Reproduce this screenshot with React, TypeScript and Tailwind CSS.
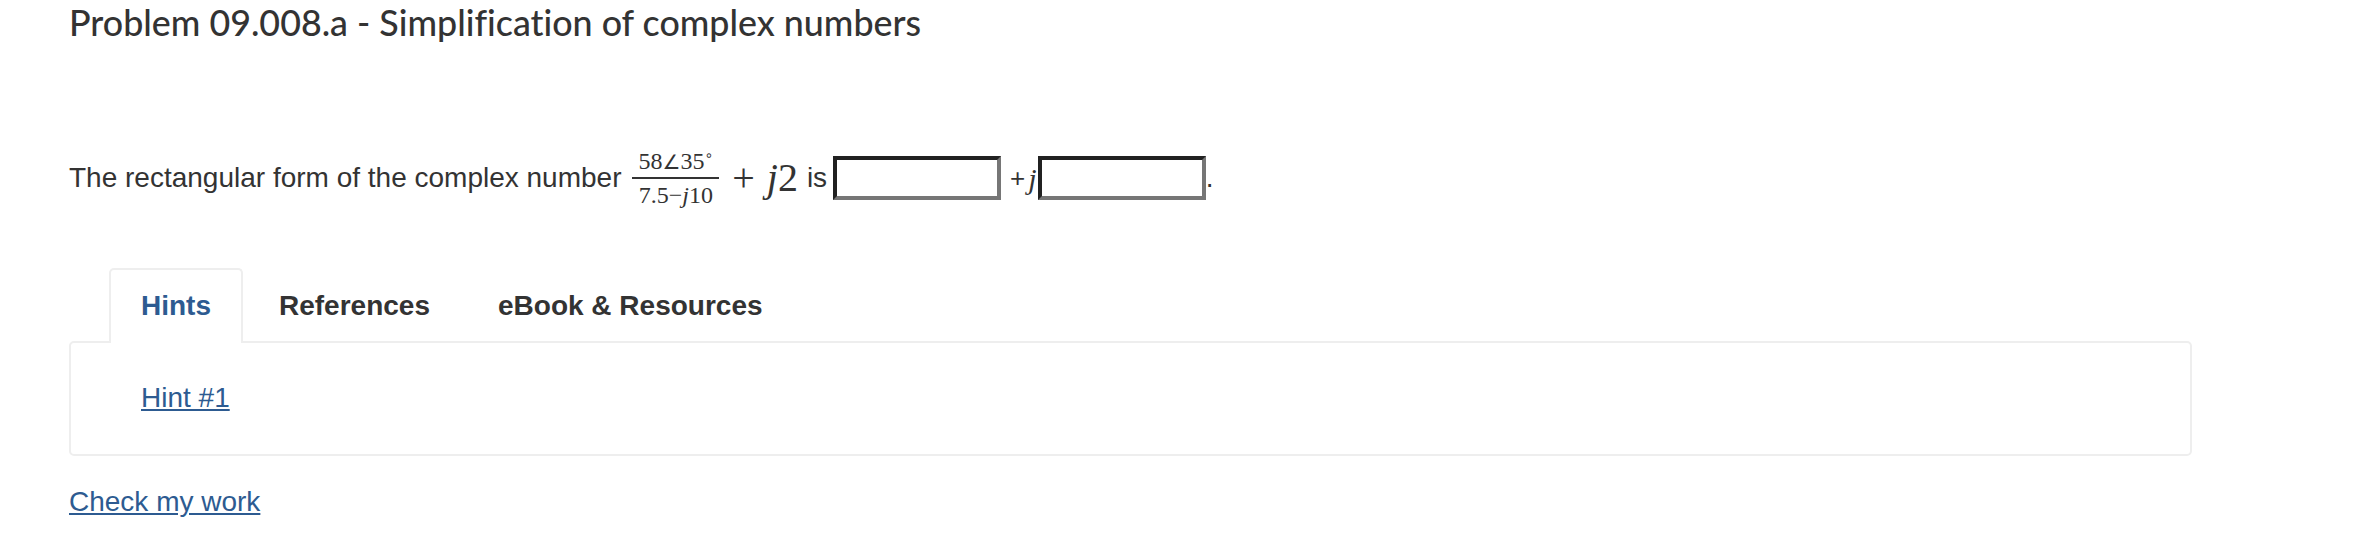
import React from 'react';

const serif = "font-['Liberation_Serif',serif]";

const AnswerBox: React.FC = () => (
  <input
    type="text"
    className="h-[44px] w-[168px] border-[4px] border-t-[#212121] border-l-[#212121] border-r-[#767676] border-b-[#767676] bg-white"
  />
);

const Fraction: React.FC = () => (
  <span className={`mr-[13px] ml-[11px] inline-flex flex-col items-center text-[24px] leading-[27px] text-[#333] ${serif}`}>
    <span className="border-b-2 border-[#333] px-[6px] pb-[1px]">
      58<span className="font-['DejaVu_Sans',sans-serif] text-[20px]">∠</span>35
      <span className="relative -top-[9px] font-['DejaVu_Sans',sans-serif] text-[14px] leading-none">∘</span>
    </span>
    <span className="pt-[3px]">
      7.5−<i>j</i>10
    </span>
  </span>
);

export default function App() {
  return (
    <div className="h-[551px] w-[2371px] overflow-hidden bg-white px-[69px] font-['Liberation_Sans',Arial,sans-serif] text-[#333]">
      <h1 className="pt-[2px] font-['Lato',sans-serif] text-[35.8px] leading-[42px] font-medium text-[#333] [font-variant-ligatures:none]">
        Problem 09.008.a - Simplification of complex numbers
      </h1>

      <div className="mt-[104px] flex h-[60px] items-center text-[28px]">
        <span>The rectangular form of the complex number</span>
        <Fraction />
        <span className={`text-[40px] ${serif}`}>
          +<i className="ml-[12px]">j</i>2
        </span>
        <span className="mr-[6px] ml-[9px]">is</span>
        <AnswerBox />
        <span className="ml-[9px] text-[26px] font-medium">+</span>
        <i className={`mr-[1px] ml-[3px] text-[30px] ${serif}`}>j</i>
        <AnswerBox />
        <span>.</span>
      </div>

      <div className="mt-[60px]">
        <div className="flex pl-[40px]">
          <div className="z-10 -mb-[2px] h-[75px] w-[134px] rounded-t-[5px] border-2 border-b-0 border-[#eee] bg-white pt-[15px] pl-[30px] text-[28px] font-bold text-[#2d5b91]">
            Hints
          </div>
          <div className="ml-[36px] pt-[17px] text-[28px] font-bold">References</div>
          <div className="ml-[68px] pt-[17px] text-[28px] font-bold">eBook &amp; Resources</div>
        </div>
        <div className="h-[115px] w-[2123px] rounded-[5px] border-2 border-[#eee] pt-[36px] pl-[70px] text-[28px] leading-[38px]">
          <a href="#" className="text-[#2d5b91] underline">
            Hint #1
          </a>
        </div>
      </div>

      <div className="mt-[27px] text-[28px] leading-[38px]">
        <a href="#" className="text-[#2d5b91] underline">
          Check my work
        </a>
      </div>
    </div>
  );
}
